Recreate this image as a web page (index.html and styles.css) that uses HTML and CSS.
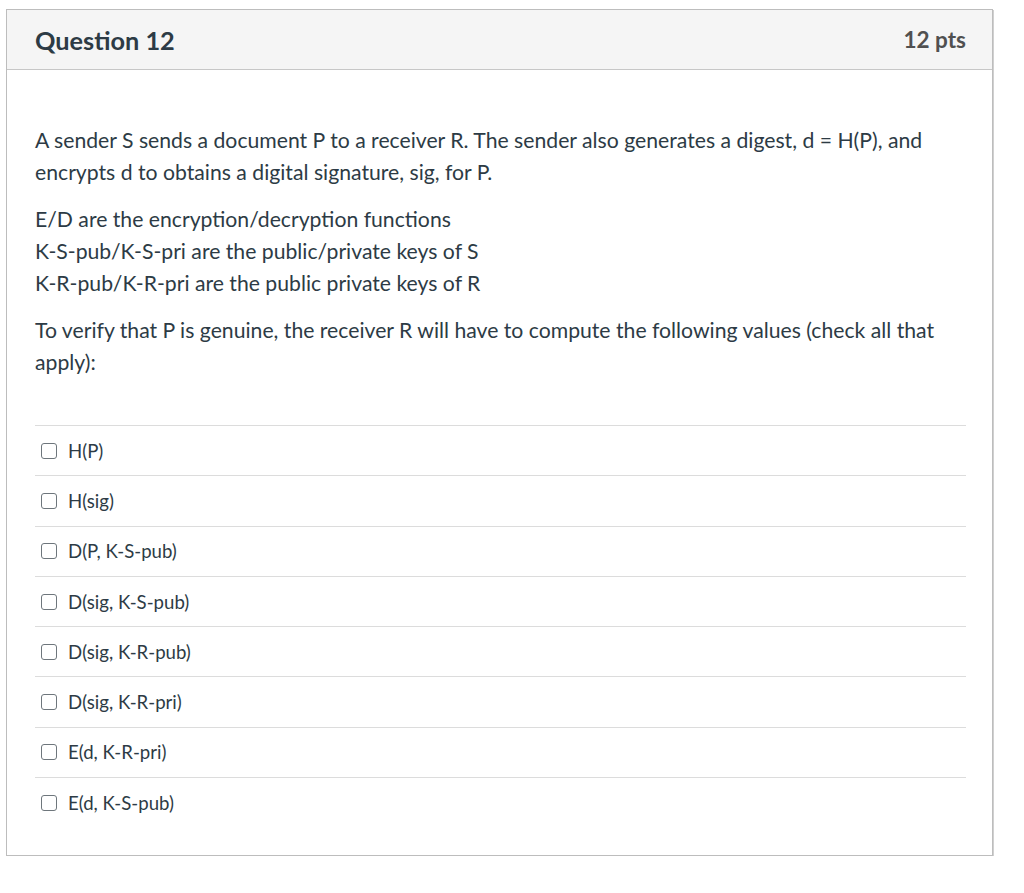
FILE: index.html
```html
<!DOCTYPE html>
<html>
<head>
<meta charset="utf-8">
<link rel="stylesheet" href="styles.css">
</head>
<body>
<div class="question">
  <div class="header">
    <span class="title">Question 12</span>
    <span class="points">12 pts</span>
  </div>
  <div class="content">
    <div class="text">
      <p>A sender S sends a document P to a receiver R. The sender also generates a digest, d = H(P), and encrypts d to obtains a digital signature, sig, for P.</p>
      <p>E/D are the encryption/decryption functions<br>K-S-pub/K-S-pri are the public/private keys of S<br>K-R-pub/K-R-pri are the public private keys of R</p>
      <p>To verify that P is genuine, the receiver R will have to compute the following values (check all that apply):</p>
    </div>
    <div class="answers">
      <label class="answer"><span class="box"></span><span>H(P)</span></label>
      <label class="answer"><span class="box"></span><span>H(sig)</span></label>
      <label class="answer"><span class="box"></span><span>D(P, K-S-pub)</span></label>
      <label class="answer"><span class="box"></span><span>D(sig, K-S-pub)</span></label>
      <label class="answer"><span class="box"></span><span>D(sig, K-R-pub)</span></label>
      <label class="answer"><span class="box"></span><span>D(sig, K-R-pri)</span></label>
      <label class="answer"><span class="box"></span><span>E(d, K-R-pri)</span></label>
      <label class="answer"><span class="box"></span><span>E(d, K-S-pub)</span></label>
    </div>
  </div>
</div>
</body>
</html>
```

FILE: styles.css
```css
html, body {
  margin: 0;
  padding: 0;
  background: #fff;
}
body {
  font-family: Lato, "Liberation Sans", sans-serif;
  color: #2d3b45;
}
.question {
  margin: 9px 0 0 6px;
  width: 987px;
  box-sizing: border-box;
  border: 1px solid #bdbdbd;
  box-shadow: 1px 1px 0 #d0d0d0;
}
.header {
  height: 59px;
  background: #f5f5f5;
  border-bottom: 1px solid #c7c7c7;
  display: flex;
  align-items: center;
  justify-content: space-between;
  padding: 0 26px 0 28px;
}
.title {
  font-size: 25.3px;
  font-weight: 700;
  color: #2d3b45;
}
.points {
  font-size: 22.5px;
  font-weight: 700;
  color: #505050;
}
.content {
  padding: 54px 26px 28px 28px;
}
.text p {
  margin: 0 0 15px 0;
  font-size: 21.2px;
  line-height: 32px;
}
.text p:last-child {
  margin-bottom: 0;
}
.answers {
  margin-top: 47px;
}
.answer {
  display: flex;
  align-items: center;
  height: 49.3px;
  border-top: 1px solid #dcdcdc;
  padding-left: 6px;
  font-size: 18.6px;
  color: #2d3b45;
}
.box {
  width: 14px;
  height: 14px;
  border: 1px solid #6e767c;
  border-radius: 3px;
  margin-right: 11px;
  box-sizing: content-box;
}
```
